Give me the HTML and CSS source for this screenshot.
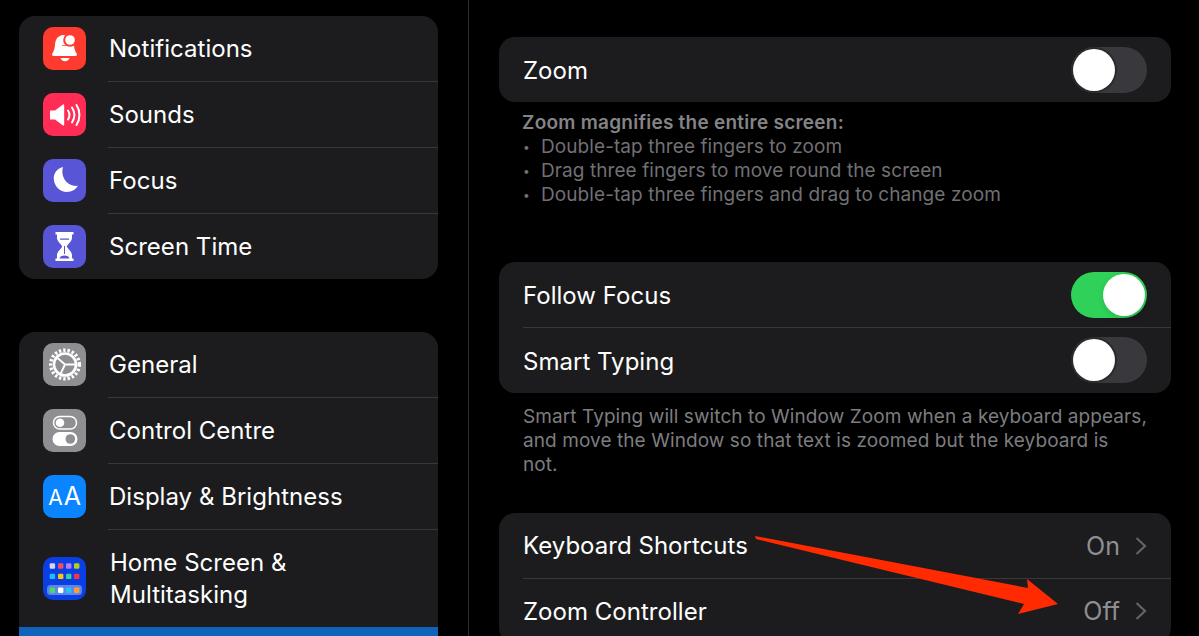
FILE: index.html
```html
<!DOCTYPE html>
<html lang="en">
<head>
  <meta charset="UTF-8" />
  <title>Zoom Settings</title>
  <link rel="stylesheet" href="styles.css">
</head>
<body>
  <div id="main-container">
    <!-- Settings sidebar -->
    <div id="sidebar">
      <div class="group">
        <div class="side-row">
          <svg class="icon" viewBox="0 0 43 43">
            <rect width="43" height="43" fill="#ff3b30"/>
            <path d="M19 8.500c-4.500.6-6.600 4.200-6.900 8.600-.3 4.300-1.300 7.300-2.600 9.100-.9 1.300-.4 2.800 1.300 2.800h21.400c1.700 0 2.200-1.500 1.300-2.800-1.300-1.800-2.200-4.300-2.500-7.500H19z" fill="#fff"/>
            <path d="M17.500 31h9c-.4 2-2.300 3.200-4.500 3.200s-4.100-1.200-4.500-3.200z" fill="#fff"/>
            <path d="M17 12c0-3 1-4 3-4h6v10H17z" fill="#fff"/>
            <circle cx="27" cy="13" r="6.800" fill="#ff3b30"/>
            <circle cx="27" cy="13" r="4.800" fill="#fff"/>
          </svg>
          <div class="side-label">Notifications</div>
        </div>
        <div class="side-row">
          <svg class="icon" viewBox="0 0 43 43">
            <rect width="43" height="43" fill="#ff2d55"/>
            <path d="M7 17.500h5L20 11.500c.6-.4 1.200 0 1.200.7v19.600c0 .7-.6 1.100-1.200.7L12 26.500H7z" fill="#fff"/>
            <path d="M25 17.500c1.800 2.800 1.800 6.200 0 9M29 14.500c3 4.600 3 10.400 0 15M33.500 12c3.900 6 3.900 14 0 20" fill="none" stroke="#fff" stroke-width="2" stroke-linecap="round"/>
          </svg>
          <div class="side-label">Sounds</div>
        </div>
        <div class="side-row">
          <svg class="icon" viewBox="0 0 43 43">
            <rect width="43" height="43" fill="#5856d6"/>
            <path d="M20 8C13.800 9.300 10.500 14.500 10.800 20c.4 7.200 6 13 13.200 13 4.700 0 8.700-2.300 10.800-6.200-9.800 1.300-17.800-8.300-14.800-18.800z" fill="#fff"/>
          </svg>
          <div class="side-label">Focus</div>
        </div>
        <div class="side-row">
          <svg class="icon" viewBox="0 0 43 43">
            <rect width="43" height="43" fill="#5856d6"/>
            <path d="M12.500 7h18v2.500h-1.500v3.500c0 3.300-4 6-5.200 8.500 1.200 2.500 5.200 5.200 5.200 8.500v3.500h1.500V36h-18v-2.500H14V30c0-3.300 4-6 5.200-8.500-1.200-2.500-5.200-5.200-5.200-8.500V9.500h-1.500z" fill="#fff"/>
            <path d="M17 13.500h9v1.200h-9zM21 21h1v8h-1zM16.500 33.500c.3-1.800 2.500-3 5-3s4.700 1.200 5 3z" fill="#5856d6"/>
          </svg>
          <div class="side-label">Screen Time</div>
        </div>
      </div>

      <div class="group">
        <div class="side-row">
          <svg class="icon" viewBox="0 0 43 43">
            <rect width="43" height="43" fill="#8e8e93"/>
            <circle cx="22" cy="21.500" r="14.300" fill="none" stroke="#fff" stroke-width="3.500" stroke-dasharray="2.400 1.940"/>
            <circle cx="22" cy="21.500" r="11" fill="none" stroke="#fff" stroke-width="2.600"/>
            <path d="M22 21.500L14.500 15M22 21.500h10M22 21.500l-4.500 9.500" stroke="#fff" stroke-width="1.800" fill="none"/>
          </svg>
          <div class="side-label">General</div>
        </div>
        <div class="side-row">
          <svg class="icon" viewBox="0 0 43 43">
            <rect width="43" height="43" fill="#8e8e93"/>
            <rect x="10.500" y="7.500" width="23" height="12.500" rx="6.250" fill="none" stroke="#fff" stroke-width="1.500"/>
            <circle cx="17" cy="13.700" r="4.300" fill="#fff"/>
            <rect x="9.500" y="23" width="25" height="14" rx="7" fill="#fff"/>
            <circle cx="27.300" cy="30" r="4.800" fill="#8e8e93"/>
          </svg>
          <div class="side-label">Control Centre</div>
        </div>
        <div class="side-row">
          <div class="icon icon-aa"><span class="aa-small">A</span><span class="aa-big">A</span></div>
          <div class="side-label">Display &amp; Brightness</div>
        </div>
        <div class="side-row side-row-tall">
          <svg class="icon" viewBox="0 0 43 43">
            <rect width="43" height="43" fill="#0b3fe6"/>
            <rect x="4" y="28" width="35" height="10" rx="3.500" fill="#5d86e8"/>
            <rect x="6.700" y="6.300" width="5.400" height="5.400" rx="1.200" fill="#d9d5e6"/>
            <rect x="15" y="6.300" width="5.400" height="5.400" rx="1.200" fill="#f0505a"/>
            <rect x="23" y="6.300" width="5.400" height="5.400" rx="1.200" fill="#b77cf0"/>
            <rect x="31" y="6.300" width="5.400" height="5.400" rx="1.200" fill="#b8cc1e"/>
            <rect x="6.700" y="16.700" width="5.400" height="5.400" rx="1.200" fill="#1cc0f5"/>
            <rect x="15" y="16.700" width="5.400" height="5.400" rx="1.200" fill="#ffc40a"/>
            <rect x="23" y="16.700" width="5.400" height="5.400" rx="1.200" fill="#34d399"/>
            <rect x="31" y="16.700" width="5.400" height="5.400" rx="1.200" fill="#ff3040"/>
            <rect x="6.700" y="30.500" width="5.400" height="5.400" rx="1.200" fill="#4cd964"/>
            <rect x="15" y="30.500" width="5.400" height="5.400" rx="1.200" fill="#fff"/>
            <rect x="23" y="30.500" width="5.400" height="5.400" rx="1.200" fill="#22c4f8"/>
            <rect x="31" y="30.500" width="5.400" height="5.400" rx="1.200" fill="#ffa030"/>
          </svg>
          <div class="side-label side-label-wrap">Home Screen &amp;<br>Multitasking</div>
        </div>
      </div>
      <div class="side-selected"></div>
    </div>

    <!-- Zoom detail pane -->
    <div id="detail">
      <div class="group detail-first">
        <div class="detail-row">
          <div class="detail-label">Zoom</div>
          <div class="toggle"><div class="knob"></div></div>
        </div>
      </div>
      <div class="note note-list">
        <div class="note-title">Zoom magnifies the entire screen:</div>
        <div class="note-item">Double-tap three fingers to zoom</div>
        <div class="note-item">Drag three fingers to move round the screen</div>
        <div class="note-item">Double-tap three fingers and drag to change zoom</div>
      </div>

      <div class="group">
        <div class="detail-row">
          <div class="detail-label">Follow Focus</div>
          <div class="toggle toggle-on"><div class="knob"></div></div>
        </div>
        <div class="detail-row">
          <div class="detail-label">Smart Typing</div>
          <div class="toggle"><div class="knob"></div></div>
        </div>
      </div>
      <div class="note note-text">Smart Typing will switch to Window Zoom when a keyboard appears, and move the Window so that text is zoomed but the keyboard is not.</div>

      <div class="group">
        <div class="detail-row">
          <div class="detail-label detail-label-link">Keyboard Shortcuts</div>
          <div class="detail-value">On
            <svg class="chevron" viewBox="0 0 12 20"><path d="M1.500 2l8.500 8-8.500 8" fill="none" stroke="#636366" stroke-width="2.200"/></svg>
          </div>
        </div>
        <div class="detail-row">
          <div class="detail-label detail-label-link">Zoom Controller</div>
          <div class="detail-value">Off
            <svg class="chevron" viewBox="0 0 12 20"><path d="M1.500 2l8.500 8-8.500 8" fill="none" stroke="#636366" stroke-width="2.200"/></svg>
          </div>
        </div>
      </div>
    </div>

    <!-- Red annotation arrow -->
    <svg class="arrow" viewBox="0 0 1199 636">
      <path d="M755 536l1 3 268 65-6 10 40-10-31-25 1 9z" fill="#ff2a00"/>
    </svg>
  </div>
</body>
</html>
```

FILE: styles.css
```css
/* Reset and Basic Styles */
* {
  margin: 0;
  padding: 0;
  box-sizing: border-box;
}
body {
  font-family: 'Inter', 'Liberation Sans', sans-serif;
  background: #000;
  color: #fff;
  overflow: hidden;
}
#main-container {
  position: relative;
  display: flex;
  width: 1199px;
  height: 636px;
  overflow: hidden;
}
/* Shared rounded group */
.group {
  background: #1c1c1e;
  border-radius: 16px;
  overflow: hidden;
}
/* Sidebar */
#sidebar {
  width: 469px;
  flex-shrink: 0;
  padding: 16px 30px 0 19px;
  border-right: 1px solid #2c2c2e;
}
#sidebar .group + .group {
  margin-top: 53px;
  border-radius: 16px 16px 0 0;
}
.side-row {
  display: flex;
  align-items: center;
  height: 66px;
  padding-left: 24px;
}
#sidebar .group .side-row:first-child {
  height: 65px;
}
.side-row-tall,
#sidebar .group .side-row-tall {
  height: 98px;
}
.icon {
  display: block;
  width: 43px;
  height: 43px;
  flex-shrink: 0;
  border-radius: 10px;
}
.icon-aa {
  display: flex;
  align-items: baseline;
  justify-content: center;
  gap: 1px;
  padding-top: 6px;
  background: #0a84ff;
}
.aa-small { font-size: 21px; }
.aa-big { font-size: 25px; }
.side-label {
  flex: 1;
  align-self: stretch;
  display: flex;
  align-items: center;
  margin-left: 22px;
  padding-left: 1px;
  font-size: 24px;
  letter-spacing: 0.03px;
  box-shadow: 0 1px 0 #38383a;
  color: #fff;
}
.side-label-wrap {
  padding-left: 2px;
  padding-top: 2px;
  line-height: 32px;
}
.side-row:last-child .side-label { box-shadow: none; }
.side-selected {
  height: 20px;
  background: #1063bb;
}
/* Detail pane */
#detail {
  flex: 1;
  padding: 0 28px 0 30px;
}
.detail-first { margin-top: 37px; }
.detail-row {
  display: flex;
  align-items: center;
  justify-content: space-between;
  height: 66px;
  margin-left: 24px;
  padding-right: 24px;
  box-shadow: 0 1px 0 #38383a;
}
.group .detail-row:first-child { height: 65px; }
.detail-row:last-child { box-shadow: none; }
.detail-label {
  padding-top: 2px;
  font-size: 24px;
  letter-spacing: 0.03px;
}
.detail-label-link { padding-top: 0; }
.detail-value {
  display: flex;
  align-items: center;
  gap: 15px;
  font-size: 25px;
  color: #8e8e93;
}
.chevron {
  width: 12px;
  height: 20px;
}
/* Toggles */
.toggle {
  display: flex;
  justify-content: flex-start;
  align-items: center;
  width: 76px;
  height: 46px;
  padding: 2px;
  border-radius: 23px;
  background: #39393d;
}
.toggle-on {
  justify-content: flex-end;
  background: #30d158;
}
.knob {
  width: 42px;
  height: 42px;
  border-radius: 50%;
  background: #fff;
  box-shadow: 0 0 0 2px #2a2a2c;
}
.toggle-on .knob { box-shadow: 0 2px 6px rgba(0, 0, 0, 0.12); }
/* Footnotes */
.note {
  padding: 0 24px;
  font-size: 19px;
  line-height: 24px;
  letter-spacing: 0.08px;
  color: #7d7d80;
}
.note-list {
  padding-top: 9px;
  height: 160px;
}
.note-title {
  margin-left: -1px;
  font-weight: 600;
  letter-spacing: 0.25px;
  color: #848487;
}
.note-item {
  position: relative;
  padding-left: 18px;
  color: #707073;
}
.note-item::before {
  content: "\2022";
  position: absolute;
  left: 0;
  font-size: 12px;
}
.note-text {
  padding-top: 12px;
  height: 120px;
}
/* Annotation */
.arrow {
  position: absolute;
  top: 0;
  left: 0;
  width: 1199px;
  height: 636px;
  pointer-events: none;
}
```
